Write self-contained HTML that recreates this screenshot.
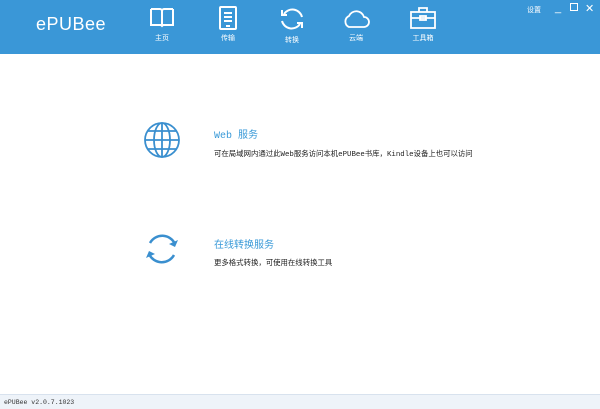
<!DOCTYPE html>
<html><head><meta charset="utf-8"><style>
*{margin:0;padding:0;box-sizing:border-box}
body{width:600px;height:409px;overflow:hidden;background:#fff;font-family:"Liberation Sans","Noto Sans CJK SC",sans-serif;position:relative}
.hd{position:absolute;left:0;top:0;width:600px;height:54px;background:#3a97d7}
.logo{position:absolute;left:36px;top:14px;color:#fff;font-size:18px;letter-spacing:0.5px}
.nav{position:absolute;top:6px;width:40px;text-align:center;color:#fff;font-size:7px}
.nav svg{display:block;margin:0 auto 3px}
.set{position:absolute;left:527px;top:5px;color:#fff;font-size:7px}
.win{position:absolute;top:2px;color:#fff;font-size:11px}
.t1{position:absolute;left:214px;color:#3a9ad8;font-size:10px;font-family:"Liberation Mono","Noto Sans CJK SC",monospace}
.t2{position:absolute;left:214px;color:#222;font-size:7.4px;font-family:"Liberation Mono","Noto Sans CJK SC",monospace}
.ft{position:absolute;left:0;top:394px;width:600px;height:15px;background:#eef3f9;border-top:1px solid #d8e2ee;font-size:6.5px;color:#333;padding:4px 0 0 4px;font-family:"Liberation Mono",monospace}
</style></head><body>
<div class="hd">
<div class="logo">ePUBee</div>
<div class="nav" style="left:142px"><svg width="26" height="24" viewBox="0 0 26 24" fill="none" stroke="#fff" stroke-width="2"><path d="M2 3h9c1 0 2 1 2 2v15M24 3h-9c-1 0-2 1-2 2M2 3v16h10l1 1 1-1h10V3"/></svg>主页</div>
<div class="nav" style="left:208px"><svg width="20" height="24" viewBox="0 0 20 24" fill="none" stroke="#fff" stroke-width="2"><rect x="2" y="1" width="16" height="22" rx="1"/><path d="M6 7h8M6 11h8M6 15h8M8 20h4"/></svg>传输</div>
<div class="nav" style="left:272px"><svg width="26" height="26" viewBox="0 0 26 26" fill="none" stroke="#fff" stroke-width="2"><path d="M5 8A10 10 0 0 1 23 11M21 18A10 10 0 0 1 3 15"/><path d="M3 4v5h5M23 22v-5h-5"/></svg>转换</div>
<div class="nav" style="left:336px"><svg width="28" height="24" viewBox="0 0 28 24" fill="none" stroke="#fff" stroke-width="1.8"><path d="M7 21h15a5 5 0 0 0 0-10 8 8 0 0 0-15-1 6 6 0 0 0 0 11z"/></svg>云端</div>
<div class="nav" style="left:403px"><svg width="28" height="24" viewBox="0 0 28 24" fill="none" stroke="#fff" stroke-width="1.8"><rect x="2" y="6" width="24" height="16"/><path d="M10 6V2h8v4M2 12h24"/><rect x="11" y="10" width="6" height="4"/></svg>工具箱</div>
<div class="set">设置</div>
<div class="win" style="left:555px">_</div>
<div class="win" style="left:570px;top:3px;width:8px;height:8px;border:1.5px solid #fff"></div>
<div class="win" style="left:585px">✕</div>
</div>
<svg style="position:absolute;left:143px;top:121px" width="38" height="38" viewBox="0 0 38 38" fill="none" stroke="#3a8fcf" stroke-width="1.8"><circle cx="19" cy="19" r="17"/><ellipse cx="19" cy="19" rx="8" ry="17"/><path d="M19 2v34M2 19h34M5 10h28M5 28h28"/></svg>
<div class="t1" style="top:126px">Web 服务</div>
<div class="t2" style="top:148px">可在局域网内通过此Web服务访问本机ePUBee书库，Kindle设备上也可以访问</div>
<svg style="position:absolute;left:143px;top:231px" width="38" height="36" viewBox="0 0 38 36" fill="none" stroke="#3a8fcf" stroke-width="2.5"><path d="M7 12A14 14 0 0 1 32 13M31 24A14 14 0 0 1 6 23"/><path d="M35 9l-3 7-6-3z" fill="#3a8fcf" stroke="none"/><path d="M3 27l3-7 6 3z" fill="#3a8fcf" stroke="none"/></svg>
<div class="t1" style="top:236px">在线转换服务</div>
<div class="t2" style="top:257px">更多格式转换，可使用在线转换工具</div>
<div class="ft">ePUBee v2.0.7.1023</div>
</body></html>
